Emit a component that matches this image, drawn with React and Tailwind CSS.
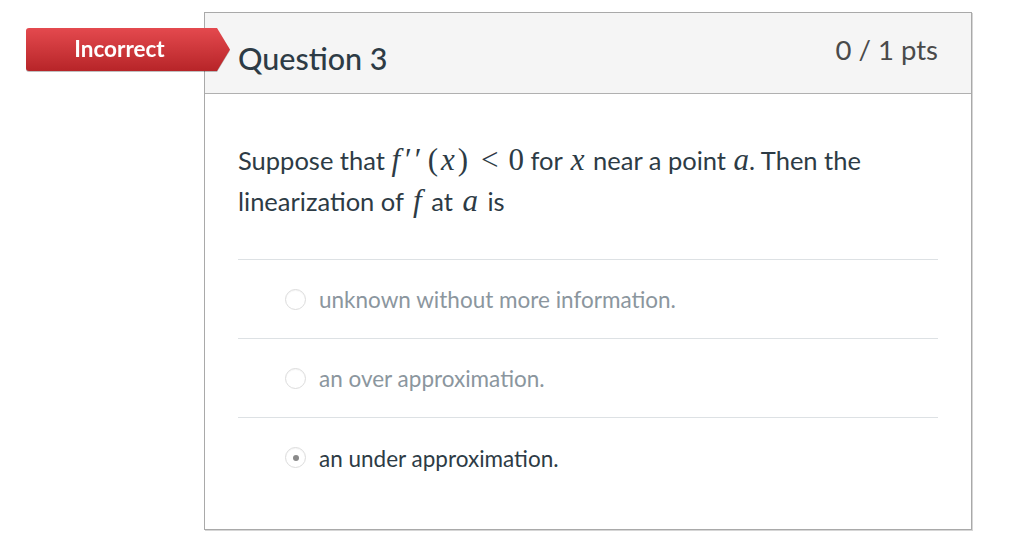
import React from "react";

const mathCls = "font-['Liberation_Serif','DejaVu_Serif',serif] text-[31px] leading-none";

function Radio({ checked }) {
  return (
    <span className="relative inline-flex h-[21px] w-[21px] shrink-0 items-center justify-center rounded-full border border-[#dcdcdc] bg-white shadow-[inset_0_1px_1px_rgba(0,0,0,0.04)]">
      {checked && <span className="h-[6px] w-[6px] rounded-full bg-[#8a8a8a]" />}
    </span>
  );
}

function Answer({ text, checked, last }) {
  return (
    <div className={"flex h-[79px] items-center pl-[47px] " + (last ? "" : "border-b border-[#dde1e4]")}>
      <Radio checked={checked} />
      <span className={"ml-[13px] mt-[2px] text-[22.5px] " + (checked ? "text-[#2d3b45]" : "text-[#8b969e]")}>{text}</span>
    </div>
  );
}

function V({ children, cls = "mx-[3px]" }) {
  return <i className={mathCls + " inline-block " + cls}>{children}</i>;
}

export default function App() {
  return (
    <div className="relative h-[558px] w-[1024px] bg-white font-['Lato','Noto_Sans',sans-serif]">
      <div className="pl-[204px] pt-[12px]">
        <div className="w-[768px] border border-[#a9a9a9] shadow-[1px_1px_0_#d6d6d6]">
          <div className="flex h-[81px] items-start justify-between border-b border-[#b0b0b0] bg-[#f5f5f5] pl-[33px] pr-[33px]">
            <h2 className="mt-[25px] text-[30.5px] font-medium leading-[40px] text-[#2d3b45]">Question 3</h2>
            <div className="mt-[19px] text-[27.5px] leading-[36px] text-[#4a4a4a]">0 / 1 pts</div>
          </div>
          <div className="px-[33px] pb-[32px] pt-[46px]">
            <p className="border-b border-[#dde1e4] pb-[37px] text-[25.5px] leading-[41px] text-[#2d3b45]">
              Suppose that{" "}
              <span className={mathCls + " inline-block"}>
                <span className="tracking-[3px]">
                  <i className="pr-[2px]">f</i>′′<span className="pl-[3px]">(</span><i>x</i>)
                </span>
                <span className="mx-[10px]">&lt;</span>0
              </span>{" "}
              for <V cls="mx-[2px]">x</V> near a point <V cls="ml-[1px]">a</V>. Then the
              <br />
              linearization of <V>f</V> at <V>a</V> is
            </p>
            <Answer text="unknown without more information." />
            <Answer text="an over approximation." />
            <Answer text="an under approximation." checked last />
          </div>
        </div>
      </div>
      <div className="absolute left-[26px] top-[28px] flex h-[43px] items-stretch drop-shadow-[0_1px_0_rgba(0,0,0,0.25)]">
        <div className="flex w-[187px] items-center justify-center rounded-l-[3px] bg-gradient-to-b from-[#e4494e] to-[#b72428] pb-[1px] text-[22.5px] font-bold text-white">
          Incorrect
        </div>
        <svg width="17" height="43" viewBox="0 0 17 43" className="block">
          <defs>
            <linearGradient id="g" x1="0" y1="0" x2="0" y2="1">
              <stop offset="0" stopColor="#e4494e" />
              <stop offset="1" stopColor="#b72428" />
            </linearGradient>
          </defs>
          <polygon points="0,0 4,0 17,21.5 4,43 0,43" fill="url(#g)" />
        </svg>
      </div>
    </div>
  );
}
